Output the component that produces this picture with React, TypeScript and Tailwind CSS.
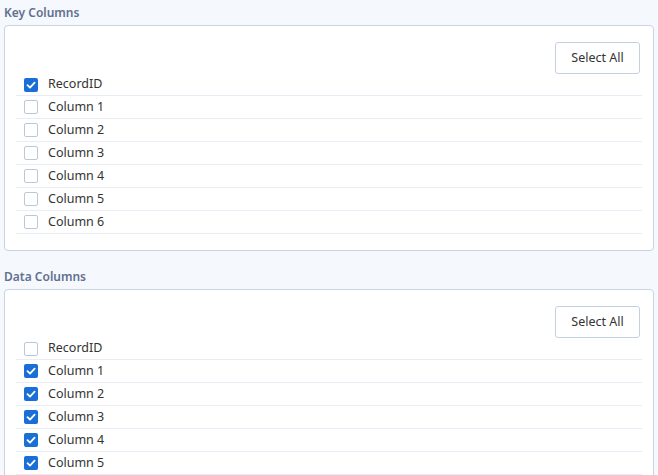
import React from "react";

const Check = ({ checked }: { checked: boolean }) =>
  checked ? (
    <span className="flex h-[14px] w-[14px] items-center justify-center rounded-[2px] bg-[#1a6fd6]">
      <svg width="10" height="10" viewBox="0 0 10 10" fill="none">
        <path d="M1.5 5.2 L4 7.6 L8.6 2.6" stroke="white" strokeWidth="1.8" strokeLinecap="round" strokeLinejoin="round" />
      </svg>
    </span>
  ) : (
    <span className="h-[14px] w-[14px] rounded-[2px] border border-[#bcc7da] bg-white" />
  );

const Panel = ({ items }: { items: { label: string; checked: boolean }[] }) => (
  <div className="rounded-[4px] border border-[#c9d3e6] bg-white px-[11px] pt-[16px] pb-[16px]">
    <div className="flex justify-end pr-[2px]">
      <button className="h-[32px] w-[85px] rounded-[3px] border border-[#c5cfe2] bg-white text-[12.5px] text-[#333]">
        Select All
      </button>
    </div>
    {items.map((it, i) => (
      <div
        key={it.label}
        className={`flex items-center gap-[10px] border-b border-[#e7ecf5] pl-[8px] ${i === 0 ? "h-[22px]" : "h-[23px]"}`}
      >
        <Check checked={it.checked} />
        <span className="text-[12.5px] text-[#333]">{it.label}</span>
      </div>
    ))}
  </div>
);

const names = ["RecordID", "Column 1", "Column 2", "Column 3", "Column 4", "Column 5", "Column 6"];

export default function App() {
  return (
    <div
      className="h-[475px] w-[658px] overflow-hidden bg-[#f5f8fd] px-[4px]"
      style={{ fontFamily: '"Noto Sans", "Open Sans", sans-serif' }}
    >
      <div className="flex h-[25px] items-center text-[12px] font-semibold text-[#62708f]">Key Columns</div>
      <Panel items={names.map((n, i) => ({ label: n, checked: i === 0 }))} />
      <div className="mt-[13px] flex h-[25px] items-center text-[12px] font-semibold text-[#62708f]">Data Columns</div>
      <Panel items={names.map((n, i) => ({ label: n, checked: i !== 0 }))} />
    </div>
  );
}
